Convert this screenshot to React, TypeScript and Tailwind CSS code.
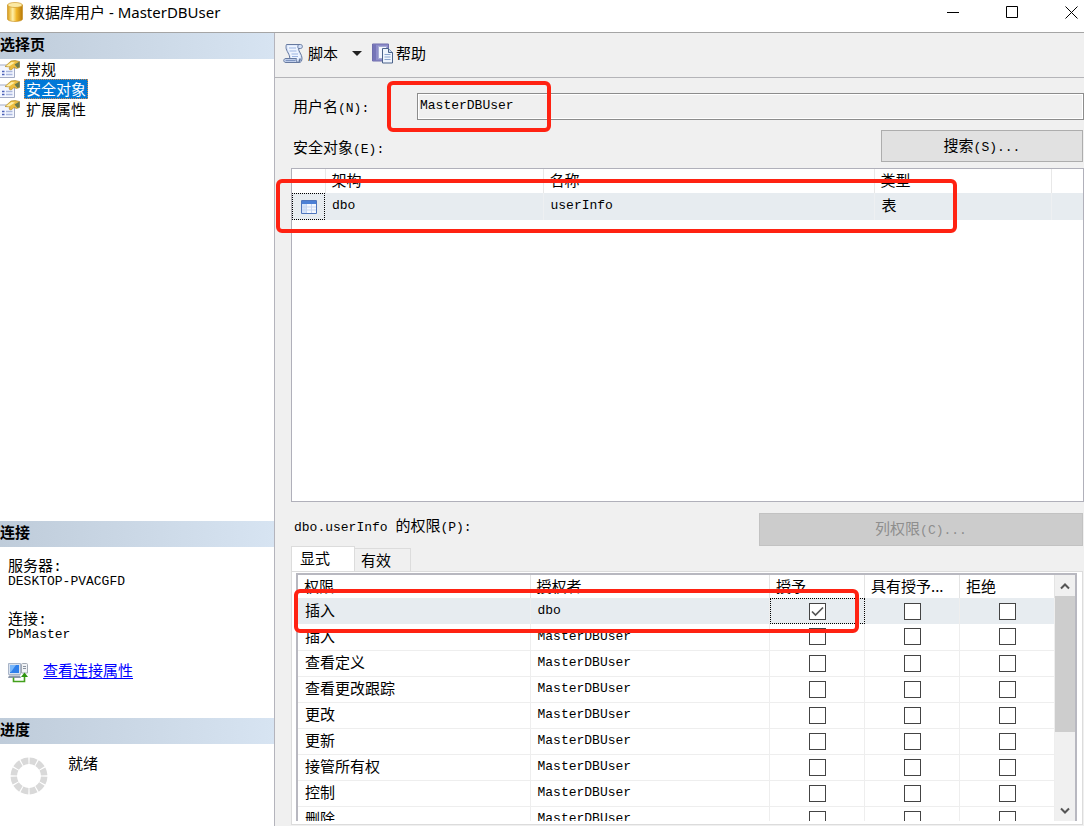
import { useState } from 'react'
import type { ReactNode } from 'react'

const PAGES = ['常规', '安全对象', '扩展属性']

const SECURABLES = [{ schema: 'dbo', name: 'userInfo', type: '表' }]

type Permission = { name: string; grantor: string; grant: boolean }

const PERMISSIONS: Permission[] = [
  { name: '插入', grantor: 'dbo', grant: true },
  { name: '插入', grantor: 'MasterDBUser', grant: false },
  { name: '查看定义', grantor: 'MasterDBUser', grant: false },
  { name: '查看更改跟踪', grantor: 'MasterDBUser', grant: false },
  { name: '更改', grantor: 'MasterDBUser', grant: false },
  { name: '更新', grantor: 'MasterDBUser', grant: false },
  { name: '接管所有权', grantor: 'MasterDBUser', grant: false },
  { name: '控制', grantor: 'MasterDBUser', grant: false },
  { name: '删除', grantor: 'MasterDBUser', grant: false },
]

/** Half-width text, set a bit smaller than the CJK text beside it. */
function Latin({ children }: { children: ReactNode }) {
  return <span className="font-['Liberation_Mono',monospace] text-[13px]">{children}</span>
}

function DatabaseIcon() {
  return (
    <svg width="16" height="20" viewBox="0 0 16 20" aria-hidden="true">
      <defs>
        <linearGradient id="db" x1="0" x2="1">
          <stop offset="0" stopColor="#d99a12" />
          <stop offset="0.35" stopColor="#fff0a8" />
          <stop offset="0.6" stopColor="#f0b62a" />
          <stop offset="1" stopColor="#b87908" />
        </linearGradient>
      </defs>
      <path d="M.5 3v14c0 1.500 3.400 2.500 7.500 2.500s7.500-1 7.500-2.500V3z" fill="url(#db)" stroke="#c58a18" strokeWidth=".6" />
      <ellipse cx="8" cy="3" rx="7.400" ry="2.500" fill="#fbe9a4" stroke="#cf9a2c" strokeWidth=".7" />
    </svg>
  )
}

function PageIcon() {
  return (
    <svg width="20" height="19" viewBox="0 0 20 19" aria-hidden="true">
      <path d="M-1 5h15.500v12.500H-1z" fill="#f3f6ff" stroke="#a3abc4" />
      <path d="M2 11.500h2.500M2 14.500h2.500" stroke="#4d62b8" strokeWidth="1.500" />
      <path d="M6 11.500h6.500M6 14.500h6.500" stroke="#a9b6dd" strokeWidth="1.500" />
      <path d="M5 6.500 11 1l4-.5 4.500 1v6l-3 1-2.500-1-3 2.500-2-1 1-2z" fill="#edbd3f" stroke="#b08c30" strokeWidth=".7" />
      <path d="m6 6 5.500-4 3.500.500-6 4z" fill="#fff0a6" />
      <path d="m14.500 4.500 5-3v5.500l-2 1z" fill="#6b7a4c" />
    </svg>
  )
}

function ScriptIcon() {
  return (
    <svg width="21" height="21" viewBox="0 0 21 21" aria-hidden="true">
      <path d="M3.500 1.500h14c2.500 0 2.500 4 0 4h-2c0 3 3.500 6 3.500 9.500 0 3-1 4.500-3 4.500H3c-3 0-3-4 0-4h3.500C7.500 12 3 8 3 4.500c0-1.500.2-2.500.5-3z" fill="#d3e0f8" stroke="#66799f" />
      <path d="M4.500 2.500h10v3c0 4 3 6 3 9.500l-3 1H8C8.500 12 4 8 4.500 2.500z" fill="#eef4ff" />
      <path d="M15.500 5.500c-1-1-1-3 .5-4M3 15.500h10.500c-1 1.500 0 4 2 4" fill="none" stroke="#66799f" />
      <path d="M6 5h7M6.500 8h7M8.500 11h6.500M9 13.500h6" stroke="#9bb4e2" />
      <path d="M2.500 17.500h10" stroke="#7f95c0" strokeWidth="1.500" />
      <path d="M17 15.500c0 2-.5 3-1.500 3" fill="none" stroke="#5d7198" strokeWidth="1.500" />
    </svg>
  )
}

function HelpIcon() {
  return (
    <svg width="21" height="21" viewBox="0 0 21 21" aria-hidden="true">
      <path d="M.5 1h16v17H.5z" fill="#8e8dca" stroke="#6e6dad" />
      <path d="M1 1.500h3v16H1z" fill="#7675b8" />
      <path d="M6.500 3.500h8v12h-8z" fill="#f4f6ff" stroke="#a5abd4" />
      <path d="M10.500 5.500h6l4 4v10.500h-10z" fill="#eef4fd" stroke="#4b638a" />
      <path d="M16.500 5.500v4h4" fill="#c6d6ee" stroke="#4b638a" />
      <path d="M12.500 11.500h6M12.500 14h6M12.500 16.500h6" stroke="#8ba5cf" />
    </svg>
  )
}

function TableIcon() {
  return (
    <svg width="16" height="14" viewBox="0 0 16 14" aria-hidden="true">
      <path d="M.5.5h15v13H.5z" fill="#f4f8ff" stroke="#4f76bd" />
      <path d="M1 1h14v3H1z" fill="#4b80d6" />
      <path d="M1 4h4v9H1z" fill="#d3e2fa" />
      <path d="M5.500 4v9M10.500 4v9M1 7h14M1 10h14" stroke="#c5d5f0" />
    </svg>
  )
}

function ConnectionIcon() {
  return (
    <svg width="20" height="20" viewBox="0 0 20 20" aria-hidden="true">
      <path d="M.5.5h12v11H.5z" fill="#d8e2f0" stroke="#a9b5c8" />
      <path d="M2 2h9v8H2z" fill="#2f7fea" />
      <path d="M2 2h6L3 9H2z" fill="#79b7fa" />
      <path d="M1 12.500h11l1 2.500H0z" fill="#8c98ad" />
      <path d="M14.500.5h4c.6 0 1 .4 1 1v8.500h-6V1.500c0-.6.400-1 1-1z" fill="#f1f3f6" stroke="#a3aab5" />
      <path d="M15 3.500h3M15 5.500h3" stroke="#8a929e" />
      <path d="M5.500 14.500V18.500h11V14" fill="none" stroke="#43a01c" strokeWidth="1.600" />
      <path d="m16.500 9.500 3.500 4.500h-7z" fill="#2f9410" />
    </svg>
  )
}

function Spinner() {
  return (
    <svg width="38" height="38" viewBox="0 0 38 38" aria-hidden="true">
      {/* 12 segments around the ring */}
      <circle cx="19" cy="19" r="15.200" fill="none" stroke="#d9d9d9" strokeWidth="6.500" pathLength="120" strokeDasharray="8.500 1.500" strokeDashoffset="-0.750" />
    </svg>
  )
}

function SectionTitle({ children }: { children: ReactNode }) {
  return (
    <h2 className="h-[26px] bg-linear-to-r from-[#bfccda] to-[#d7e4f2] text-[15px] leading-[22px] font-bold">
      {children}
    </h2>
  )
}

function Highlight({ className }: { className: string }) {
  return <div className={`pointer-events-none absolute rounded-md border-4 border-[#ff2212] ${className}`} />
}

function Check({ label, initial = false }: { label: string; initial?: boolean }) {
  const [checked, setChecked] = useState(initial)
  return (
    <label className="mx-auto grid w-[17px] place-items-center">
      <input
        type="checkbox"
        aria-label={label}
        checked={checked}
        onChange={(e) => setChecked(e.target.checked)}
        className="col-start-1 row-start-1 size-[17px] appearance-none border border-[#444] bg-white"
      />
      {checked && (
        <svg className="pointer-events-none col-start-1 row-start-1" width="13" height="13" viewBox="0 0 13 13" aria-hidden="true">
          <path d="m1 6.500 3.500 3.500L12 2.500" fill="none" stroke="#555" strokeWidth="1.700" />
        </svg>
      )}
    </label>
  )
}

function TitleBar() {
  return (
    <header className="flex h-[33px] shrink-0 items-center border-b border-[#a5a5a5] bg-white pb-2 pl-[7px]">
      <DatabaseIcon />
      <h1 className="ml-[7px] flex-1 font-['Noto_Sans','Noto_Sans_CJK_SC',sans-serif] text-[15px] leading-5">
        数据库用户 - MasterDBUser
      </h1>
      <div className="flex gap-[46px] pr-1.5">
        <button type="button" aria-label="最小化">
          <svg width="13" height="13" viewBox="0 0 13 13"><path d="M0 6.500h12" stroke="#000" /></svg>
        </button>
        <button type="button" aria-label="最大化">
          <svg width="13" height="13" viewBox="0 0 13 13"><path d="M.5.5h11v11H.5z" fill="none" stroke="#000" /></svg>
        </button>
        <button type="button" aria-label="关闭">
          <svg width="13" height="13" viewBox="0 0 13 13"><path d="m.5.5 12 12m0-12-12 12" stroke="#000" /></svg>
        </button>
      </div>
    </header>
  )
}

function Sidebar() {
  const [page, setPage] = useState('安全对象')

  return (
    <aside className="flex w-[275px] shrink-0 flex-col border-r border-[#b4b4bc] bg-white">
      <SectionTitle>选择页</SectionTitle>
      <nav className="flex flex-1 flex-col">
        {PAGES.map((p) => (
          <button key={p} type="button" onClick={() => setPage(p)} className="flex h-5 items-center gap-1">
            <PageIcon />
            <span
              className={
                page === p
                  ? 'bg-[#0078d7] px-0.5 leading-5 text-white outline-1 -outline-offset-1 outline-[#d08a4a] outline-dotted'
                  : 'px-0.5 leading-5'
              }
            >
              {p}
            </span>
          </button>
        ))}
      </nav>

      <SectionTitle>连接</SectionTitle>
      <div className="h-[171px] px-2 pt-3 font-['Liberation_Mono','Noto_Sans_CJK_SC',monospace] text-[13px] leading-3">
        <p className="text-[15px] leading-[17px]">服务器:</p>
        <p>DESKTOP-PVACGFD</p>
        <p className="mt-6 text-[15px] leading-[17px]">连接:</p>
        <p>PbMaster</p>
        <p className="mt-[22px] flex items-center gap-[15px]">
          <ConnectionIcon />
          <a href="#connection" className="text-[15px] leading-5 text-[#0000ff] underline underline-offset-2">
            查看连接属性
          </a>
        </p>
      </div>

      <SectionTitle>进度</SectionTitle>
      <div className="flex h-[82px] gap-5 pt-[13px] pl-2.5">
        <Spinner />
        <p className="-mt-1 leading-5">就绪</p>
      </div>
    </aside>
  )
}

function Toolbar() {
  return (
    <div className="flex h-[45px] shrink-0 items-center border-b border-[#b4b4b8] pb-1 pl-2">
      <button type="button" className="flex items-center gap-1">
        <ScriptIcon />
        脚本
        <svg className="ml-2.5" width="10" height="5" viewBox="0 0 10 5" aria-hidden="true"><path d="M0 0h10L5 5z" fill="#222" /></svg>
      </button>
      <button type="button" className="ml-2.5 flex items-center gap-[3px]">
        <HelpIcon />
        帮助
      </button>
    </div>
  )
}

function SecurablesTable() {
  return (
    <div className="relative mt-1.5 flex min-h-0 flex-1">
      <div className="flex-1 overflow-hidden border border-[#b0b0ba] bg-white">
        <table className="w-full table-fixed border-collapse text-left">
          <colgroup>
            <col className="w-[33px]" />
            <col className="w-[218px]" />
            <col />
            <col className="w-[177px]" />
            <col className="w-8" />
          </colgroup>
          <thead>
            <tr className="h-6 leading-5">
              <th className="border-r border-[#e8e8e8]" />
              <th className="border-r border-[#e8e8e8] pb-0.5 pl-1.5 font-normal">架构</th>
              <th className="border-r border-[#e8e8e8] pb-0.5 pl-1.5 font-normal">名称</th>
              <th className="border-r border-[#e8e8e8] pb-0.5 pl-1.5 font-normal">类型</th>
              <th />
            </tr>
          </thead>
          <tbody>
            {SECURABLES.map((s) => (
              <tr key={s.name} className="h-[27px] bg-[#e7ecf0] leading-5">
                <td className="outline-1 -outline-offset-1 outline-black outline-dotted">
                  <div className="flex justify-center"><TableIcon /></div>
                </td>
                <td className="border-r border-[#eef0f2] pb-1 pl-[7px]"><Latin>{s.schema}</Latin></td>
                <td className="border-r border-[#eef0f2] pb-1 pl-[7px]"><Latin>{s.name}</Latin></td>
                <td className="border-r border-[#eef0f2] pb-1 pl-[7px]">{s.type}</td>
                <td />
              </tr>
            ))}
          </tbody>
        </table>
      </div>
      <Highlight className="top-[11px] -left-[15px] h-[54px] w-[681px]" />
    </div>
  )
}

function PermissionsTable() {
  return (
    <div className="relative mr-px flex h-[254px] shrink-0 border border-[#dcdcdc] bg-white pt-px pr-[5px] pb-[3px] pl-1">
      <div className="flex flex-1 overflow-hidden border-x-2 border-t-2 border-[#b8b8c0]">
        <div className="flex-1 overflow-hidden">
          <table className="w-full table-fixed border-collapse text-left">
            <colgroup>
              <col className="w-[232px]" />
              <col />
              <col className="w-[95px]" />
              <col className="w-[95px]" />
              <col className="w-[95px]" />
            </colgroup>
            <thead>
              <tr className="h-[23px] leading-5">
                {['权限', '授权者', '授予', '具有授予...', '拒绝'].map((h) => (
                  <th key={h} className="border-r border-[#e4e4e4] pb-0.5 pl-1.5 font-normal whitespace-nowrap">{h}</th>
                ))}
              </tr>
            </thead>
            <tbody>
              {PERMISSIONS.map((p, i) => (
                <tr key={i} className={i === 0 ? 'h-[26px] bg-[#e7ecf0] leading-[18px]' : 'h-[26px] border-b border-[#eeeeee] leading-[18px]'}>
                  <td className="border-r border-[#eeeeee] pb-0.5 pl-[7px]">{p.name}</td>
                  <td className="border-r border-[#eeeeee] pb-[3px] pl-[7px]"><Latin>{p.grantor}</Latin></td>
                  <td
                    className={
                      i === 0
                        ? 'border-r border-[#eeeeee] outline-1 -outline-offset-1 outline-black outline-dotted'
                        : 'border-r border-[#eeeeee]'
                    }
                  >
                    <Check label={`授予 ${p.name}`} initial={p.grant} />
                  </td>
                  <td className="border-r border-[#eeeeee]"><Check label={`具有授予 ${p.name}`} /></td>
                  <td className="border-r border-[#eeeeee]"><Check label={`拒绝 ${p.name}`} /></td>
                </tr>
              ))}
            </tbody>
          </table>
        </div>
        <div className="flex w-5 flex-col bg-[#f0f0f0]">
          <button type="button" aria-label="向上滚动" className="flex h-[21px] items-center justify-center">
            <svg width="10" height="8" viewBox="0 0 10 8"><path d="m1 6.500 4-4 4 4" fill="none" stroke="#555" strokeWidth="2" /></svg>
          </button>
          <div className="h-[136px] bg-[#cdcdcd]" />
          <button type="button" aria-label="向下滚动" className="mt-auto flex h-[21px] items-center justify-center">
            <svg width="10" height="8" viewBox="0 0 10 8"><path d="m1 1.500 4 4 4-4" fill="none" stroke="#555" strokeWidth="2" /></svg>
          </button>
        </div>
      </div>
      <Highlight className="top-[17px] left-0.5 h-[44px] w-[565px]" />
    </div>
  )
}

export default function App() {
  const [tab, setTab] = useState('显式')

  return (
    <div className="flex h-screen flex-col overflow-hidden bg-[#f0f0f0] font-['Noto_Sans_CJK_SC',sans-serif] text-[15px] leading-5 text-black">
      <TitleBar />
      <div className="flex min-h-0 flex-1">
        <Sidebar />
        <main className="flex min-w-0 flex-1 flex-col">
          <Toolbar />
          <div className="flex min-h-0 flex-1 flex-col pt-[15px] pb-px pl-4">
            <div className="flex items-center">
              <label htmlFor="user-name" className="w-[126px] pt-0.5 pl-0.5">
                用户名<Latin>(N):</Latin>
              </label>
              <div className="relative flex-1">
                <input
                  id="user-name"
                  readOnly
                  defaultValue="MasterDBUser"
                  className="block h-[27px] w-full border border-[#8c8c8c] bg-[#f0f0f0] px-0.5 pb-0.5 font-['Liberation_Mono',monospace] text-[13px] inset-ring inset-ring-white outline-none"
                />
                <Highlight className="-top-3 -left-[30px] h-[51px] w-[164px]" />
              </div>
            </div>

            <div className="mt-2.5 flex items-center justify-between pr-px">
              <p className="pt-1 pl-0.5">安全对象<Latin>(E):</Latin></p>
              <button type="button" className="h-8 w-[202px] border border-[#adadad] bg-[#e1e1e1]">
                搜索<Latin>(S)...</Latin>
              </button>
            </div>
            <SecurablesTable />

            <div className="mt-[11px] flex justify-between pr-px">
              <p className="pt-0.5 pl-[3px]">
                <Latin>dbo.userInfo </Latin>的权限<Latin>(P):</Latin>
              </p>
              <button type="button" disabled className="h-[33px] w-[324px] border border-[#c2c2c2] bg-[#cccccc] text-[#8e8e8e]">
                列权限<Latin>(C)...</Latin>
              </button>
            </div>
            <div role="tablist" className="flex h-[25px] items-end">
              {['显式', '有效'].map((t) => (
                <button
                  key={t}
                  type="button"
                  role="tab"
                  aria-selected={tab === t}
                  onClick={() => setTab(t)}
                  className={
                    tab === t
                      ? 'h-[25px] w-16 border border-b-0 border-[#dcdcdc] bg-white pb-0.5 pl-2 text-left whitespace-nowrap'
                      : 'h-[23px] w-14 border border-b-0 border-l-0 border-[#dcdcdc] pl-1.5 text-left whitespace-nowrap'
                  }
                >
                  {t}
                </button>
              ))}
            </div>
            <PermissionsTable />
          </div>
        </main>
      </div>
    </div>
  )
}
